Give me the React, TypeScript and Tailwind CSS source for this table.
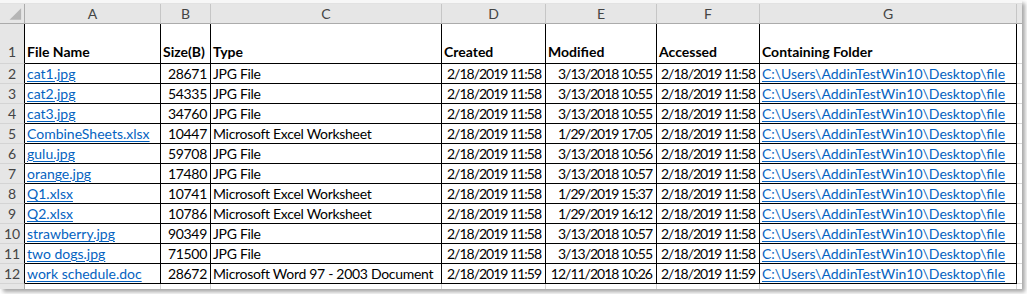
import React from "react";

type Row = {
  name: string;
  size: number;
  type: string;
  created: string;
  modified: string;
  accessed: string;
};

const FOLDER = "C:\\Users\\AddinTestWin10\\Desktop\\file";

const ROWS: Row[] = [
  { name: "cat1.jpg", size: 28671, type: "JPG File", created: "2/18/2019 11:58", modified: "3/13/2018 10:55", accessed: "2/18/2019 11:58" },
  { name: "cat2.jpg", size: 54335, type: "JPG File", created: "2/18/2019 11:58", modified: "3/13/2018 10:55", accessed: "2/18/2019 11:58" },
  { name: "cat3.jpg", size: 34760, type: "JPG File", created: "2/18/2019 11:58", modified: "3/13/2018 10:55", accessed: "2/18/2019 11:58" },
  { name: "CombineSheets.xlsx", size: 10447, type: "Microsoft Excel Worksheet", created: "2/18/2019 11:58", modified: "1/29/2019 17:05", accessed: "2/18/2019 11:58" },
  { name: "gulu.jpg", size: 59708, type: "JPG File", created: "2/18/2019 11:58", modified: "3/13/2018 10:56", accessed: "2/18/2019 11:58" },
  { name: "orange.jpg", size: 17480, type: "JPG File", created: "2/18/2019 11:58", modified: "3/13/2018 10:57", accessed: "2/18/2019 11:58" },
  { name: "Q1.xlsx", size: 10741, type: "Microsoft Excel Worksheet", created: "2/18/2019 11:58", modified: "1/29/2019 15:37", accessed: "2/18/2019 11:58" },
  { name: "Q2.xlsx", size: 10786, type: "Microsoft Excel Worksheet", created: "2/18/2019 11:58", modified: "1/29/2019 16:12", accessed: "2/18/2019 11:58" },
  { name: "strawberry.jpg", size: 90349, type: "JPG File", created: "2/18/2019 11:58", modified: "3/13/2018 10:57", accessed: "2/18/2019 11:58" },
  { name: "two dogs.jpg", size: 71500, type: "JPG File", created: "2/18/2019 11:58", modified: "3/13/2018 10:55", accessed: "2/18/2019 11:58" },
  { name: "work schedule.doc", size: 28672, type: "Microsoft Word 97 - 2003 Document", created: "2/18/2019 11:59", modified: "12/11/2018 10:26", accessed: "2/18/2019 11:59" },
];

const GRID = "grid grid-cols-[25px_136px_50px_231px_104px_111px_103px_257px_5px]";
const LETTERS = ["A", "B", "C", "D", "E", "F", "G"];
const HEADINGS = ["File Name", "Size(B)", "Type", "Created", "Modified", "Accessed", "Containing Folder"];

const cell = "h-[20px] border-r border-b border-black flex items-center whitespace-nowrap overflow-hidden";
const date = "justify-end pr-[4px] tracking-[-1px]";
const rowHead = "bg-[#e6e6e6] border-r border-b border-r-black border-b-[#d4d4d4] flex items-center justify-center text-[14px] text-[#444]";

export default function App() {
  return (
    <div className="w-[1027px] h-[294px] bg-white overflow-hidden font-['Lato',sans-serif] text-[14px] text-black">
      <div className="w-[1022px] h-[289px] bg-white shadow-[3px_3px_4px_rgba(0,0,0,0.35)] overflow-hidden">
        <div className="h-[4px] bg-[#f7f7f7] border-b border-[#e2e2e2]" />

        {/* column letters */}
        <div className={GRID}>
          <div className="h-[20px] bg-[#e6e6e6] border-r border-b border-[#ababab] flex items-center justify-center">
            <svg width="25" height="20" viewBox="0 0 25 20">
              <polygon points="22,4 22,16 10,16" fill="#b5b5b5" />
            </svg>
          </div>
          {LETTERS.map((l) => (
            <div key={l} className="h-[20px] bg-[#e6e6e6] border-r border-r-[#c6c6c6] border-b border-b-[#ababab] flex items-center justify-center text-[14px] text-[#444]">
              {l}
            </div>
          ))}
          <div className="h-[20px] bg-[#e6e6e6] border-b border-[#ababab]" />
        </div>

        {/* heading row */}
        <div className={GRID}>
          <div className="h-[40px] bg-[#e6e6e6] border-r border-b border-r-black border-b-[#d4d4d4] flex items-end justify-center pb-[1px] text-[14px] text-[#444]">1</div>
          {HEADINGS.map((h) => (
            <div key={h} className="h-[40px] border-r border-b border-black flex items-end pl-[2px] pb-[1px] font-bold whitespace-nowrap overflow-hidden">
              {h}
            </div>
          ))}
          <div className="h-[40px] border-b border-[#d4d4d4]" />
        </div>

        {ROWS.map((r, i) => (
          <div key={r.name} className={GRID}>
            <div className={`h-[20px] ${rowHead}`}>{i + 2}</div>
            <div className={`${cell} pl-[2px]`}>
              <span className="text-[#0563c1] underline underline-offset-[2px]">{r.name}</span>
            </div>
            <div className={`${cell} justify-end pr-[3px] tracking-[-0.3px]`}>{r.size}</div>
            <div className={`${cell} pl-[2px] tracking-[-0.3px]`}>{r.type}</div>
            <div className={`${cell} ${date}`}>{r.created}</div>
            <div className={`${cell} ${date}`}>{r.modified}</div>
            <div className={`${cell} ${date}`}>{r.accessed}</div>
            <div className={`${cell} pl-[2px]`}>
              <span className="text-[#0563c1] underline underline-offset-[2px]">{FOLDER}</span>
            </div>
            <div className="h-[20px] border-b border-[#d4d4d4]" />
          </div>
        ))}

        {/* partial next row */}
        <div className={GRID}>
          <div className="h-[5px] bg-[#e6e6e6] border-r border-[#ababab]" />
          {LETTERS.map((l) => (
            <div key={l} className="h-[5px] border-r border-[#d4d4d4]" />
          ))}
          <div className="h-[5px]" />
        </div>
      </div>
    </div>
  );
}
